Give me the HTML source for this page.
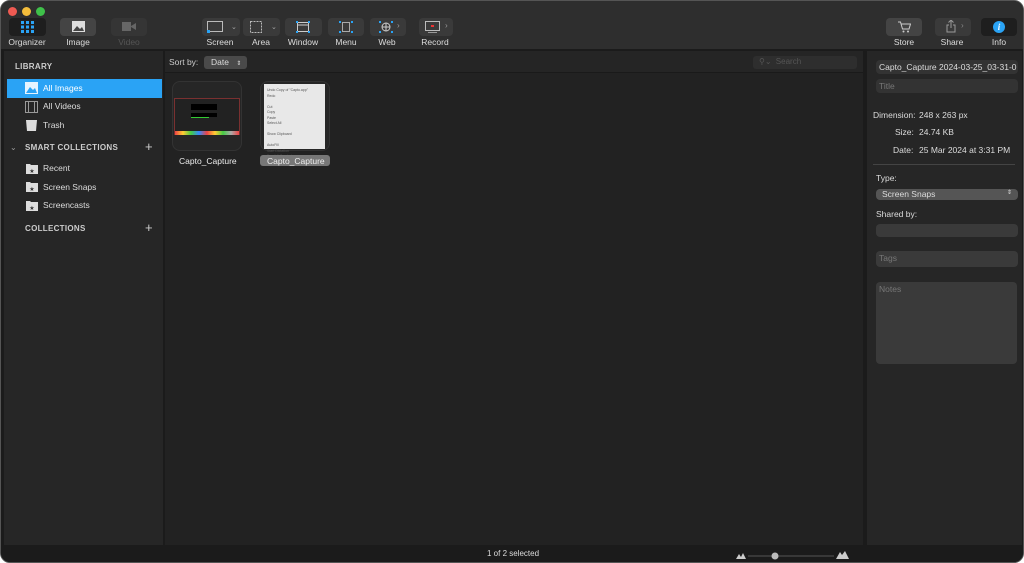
<!DOCTYPE html>
<html><head><meta charset="utf-8"><style>
*{margin:0;padding:0;box-sizing:border-box}
body{width:1024px;height:563px;background:#fff;font-family:"Liberation Sans",sans-serif;overflow:hidden;position:relative}
.win{position:absolute;left:0;top:0;width:1024px;height:563px;background:#1b1b1b;border-radius:10px;overflow:hidden;border:1px solid #555}
.a{position:absolute}
.tb{left:0;top:0;width:1024px;height:48px;background:#2e2e2e}
.btn{position:absolute;height:18px;top:17px;background:#3a3a3a;border-radius:4px}
.lbl{position:absolute;top:37px;font-size:8.5px;color:#ddd;text-align:center;width:60px;line-height:1.1}
.side{left:3px;top:50px;width:159px;height:494px;background:#262626}
.si{position:absolute;font-size:8.5px;color:#ddd;line-height:1}
.hd{position:absolute;font-size:8px;font-weight:bold;color:#ccc;letter-spacing:.3px;line-height:1}
.main{left:164px;top:50px;width:698px;height:494px;background:#222}
.rp{left:866px;top:50px;width:155px;height:494px;background:#262626}
.fld{position:absolute;left:875px;width:142px;background:#3a3a3a;border-radius:4px;font-size:8.5px;color:#777;padding:3px 3px;line-height:1}
</style></head><body><div class="win">
<div class="a tb"></div>
<div class="a" style="left:7px;top:6px;width:9px;height:9px;border-radius:50%;background:#ee5a52"></div>
<div class="a" style="left:21px;top:6px;width:9px;height:9px;border-radius:50%;background:#f4bd3b"></div>
<div class="a" style="left:35px;top:6px;width:9px;height:9px;border-radius:50%;background:#3fc14a"></div>

<div class="btn" style="left:8px;width:37px;background:#1e1e1e"></div>
<svg class="a" style="left:20px;top:20px" width="13" height="12"><g fill="#2aa3f5"><rect x="0" y="0" width="3" height="3"/><rect x="5" y="0" width="3" height="3"/><rect x="10" y="0" width="3" height="3"/><rect x="0" y="4.5" width="3" height="3"/><rect x="5" y="4.5" width="3" height="3"/><rect x="10" y="4.5" width="3" height="3"/><rect x="0" y="9" width="3" height="3"/><rect x="5" y="9" width="3" height="3"/><rect x="10" y="9" width="3" height="3"/></g></svg>
<div class="lbl" style="left:-4px">Organizer</div>
<div class="btn" style="left:59px;width:36px;background:#444"></div>
<svg class="a" style="left:71px;top:20px" width="13" height="11"><rect width="13" height="11" fill="#ddd"/><path d="M1 10 L5 5 L8 8 L10 6 L12 10Z" fill="#444"/></svg>
<div class="lbl" style="left:47px">Image</div>
<div class="btn" style="left:110px;width:36px;background:#353535"></div>
<svg class="a" style="left:121px;top:21px" width="14" height="9"><rect width="9" height="9" fill="#666"/><path d="M9 4 L14 1 L14 8 L9 5Z" fill="#666"/></svg>
<div class="lbl" style="left:98px;color:#555">Video</div>

<div class="btn" style="left:201px;width:38px"></div>
<svg class="a" style="left:206px;top:20px" width="16" height="12"><rect x=".5" y=".5" width="15" height="10" fill="none" stroke="#bbb"/><rect x="0" y="9" width="3" height="3" fill="#2aa3f5"/></svg>
<div class="a" style="left:230px;top:22px;font-size:7px;color:#aaa">⌄</div>
<div class="lbl" style="left:189px">Screen</div>
<div class="btn" style="left:242px;width:37px"></div>
<svg class="a" style="left:249px;top:20px" width="12" height="12"><rect x=".5" y=".5" width="11" height="11" fill="none" stroke="#bbb" stroke-dasharray="2 1"/></svg>
<div class="a" style="left:270px;top:22px;font-size:7px;color:#aaa">⌄</div>
<div class="lbl" style="left:230px">Area</div>
<div class="btn" style="left:284px;width:37px"></div>
<svg class="a" style="left:295px;top:20px" width="14" height="12"><rect x="1.5" y="1.5" width="11" height="9" fill="none" stroke="#ccc"/><line x1="1.5" y1="4" x2="12.5" y2="4" stroke="#ccc"/><g fill="#2aa3f5"><rect x="0" y="0" width="2" height="2"/><rect x="12" y="0" width="2" height="2"/><rect x="0" y="10" width="2" height="2"/><rect x="12" y="10" width="2" height="2"/></g></svg>
<div class="lbl" style="left:272px">Window</div>
<div class="btn" style="left:327px;width:36px"></div>
<svg class="a" style="left:338px;top:20px" width="14" height="12"><rect x="3.5" y="1.5" width="7" height="9" fill="none" stroke="#aaa"/><g fill="#2aa3f5"><rect x="0" y="0" width="2" height="2"/><rect x="12" y="0" width="2" height="2"/><rect x="0" y="10" width="2" height="2"/><rect x="12" y="10" width="2" height="2"/></g></svg>
<div class="lbl" style="left:315px">Menu</div>
<div class="btn" style="left:369px;width:36px"></div>
<svg class="a" style="left:378px;top:20px" width="14" height="12"><circle cx="7" cy="6" r="4" fill="none" stroke="#ccc"/><line x1="3" y1="6" x2="11" y2="6" stroke="#ccc"/><line x1="7" y1="2" x2="7" y2="10" stroke="#ccc"/><g fill="#2aa3f5"><rect x="0" y="0" width="2" height="2"/><rect x="12" y="0" width="2" height="2"/><rect x="0" y="10" width="2" height="2"/><rect x="12" y="10" width="2" height="2"/></g></svg>
<div class="a" style="left:396px;top:20px;font-size:8px;color:#999">›</div>
<div class="lbl" style="left:356px">Web</div>
<div class="btn" style="left:418px;width:34px"></div>
<svg class="a" style="left:424px;top:20px" width="16" height="12"><rect x=".5" y=".5" width="14" height="9" fill="none" stroke="#bbb"/><rect x="6" y="4" width="3" height="2" fill="#e33"/><line x1="3" y1="11.5" x2="12" y2="11.5" stroke="#999"/></svg>
<div class="a" style="left:444px;top:20px;font-size:8px;color:#999">›</div>
<div class="lbl" style="left:404px">Record</div>

<div class="btn" style="left:885px;width:36px;background:#444"></div>
<svg class="a" style="left:897px;top:20px" width="13" height="12"><path d="M0 1 H2.5 L4.5 8 H11 L12.5 3 H3.5" fill="none" stroke="#ccc"/><circle cx="5.5" cy="10.5" r="1" fill="#ccc"/><circle cx="10" cy="10.5" r="1" fill="#ccc"/></svg>
<div class="lbl" style="left:873px">Store</div>
<div class="btn" style="left:934px;width:36px"></div>
<svg class="a" style="left:945px;top:19px" width="10" height="13"><path d="M5 0 V8 M2.5 2.5 L5 0 L7.5 2.5 M3 5 H1 V12 H9 V5 H7" fill="none" stroke="#999"/></svg>
<div class="a" style="left:960px;top:20px;font-size:8px;color:#888">›</div>
<div class="lbl" style="left:921px">Share</div>
<div class="btn" style="left:980px;width:36px;background:#1e1e1e"></div>
<div class="a" style="left:992px;top:20px;width:12px;height:12px;border-radius:50%;background:#2aa3f5;color:#fff;font-size:9px;font-weight:bold;font-style:italic;text-align:center;line-height:12px;font-family:'Liberation Serif',serif">i</div>
<div class="lbl" style="left:968px">Info</div>

<div class="a side"></div>
<div class="hd" style="left:14px;top:62px">LIBRARY</div>
<div class="a" style="left:6px;top:78px;width:155px;height:19px;background:#2aa3f5"></div>
<svg class="a" style="left:24px;top:81px" width="13" height="12"><rect width="13" height="12" fill="#e6f4ff"/><path d="M1 11 L5 5 L8 8 L10 6 L12 11Z" fill="#2aa3f5"/></svg>
<div class="si" style="left:42px;top:83px;color:#fff">All Images</div>
<svg class="a" style="left:24px;top:100px" width="13" height="12"><rect x=".5" y=".5" width="12" height="11" fill="none" stroke="#999"/><line x1="3.5" y1="0" x2="3.5" y2="12" stroke="#999"/><line x1="9.5" y1="0" x2="9.5" y2="12" stroke="#999"/></svg>
<div class="si" style="left:42px;top:101px">All Videos</div>
<svg class="a" style="left:25px;top:118px" width="11" height="12"><path d="M0 1 H11 L10 12 H1Z" fill="#ddd"/></svg>
<div class="si" style="left:42px;top:120px">Trash</div>
<div class="a" style="left:9px;top:142px;font-size:8px;color:#999">⌄</div>
<div class="hd" style="left:24px;top:143px">SMART COLLECTIONS</div>
<div class="a" style="left:144px;top:138px;font-size:13px;color:#ccc">+</div>
<svg class="a" style="left:25px;top:162px" width="12" height="11"><path d="M0 1 H4 L5 2 H12 V11 H0Z" fill="#ddd"/><text x="6" y="10" font-size="6" text-anchor="middle" fill="#333">★</text></svg>
<div class="si" style="left:42px;top:163px">Recent</div>
<svg class="a" style="left:25px;top:180px" width="12" height="11"><path d="M0 1 H4 L5 2 H12 V11 H0Z" fill="#ddd"/><text x="6" y="10" font-size="6" text-anchor="middle" fill="#333">★</text></svg>
<div class="si" style="left:42px;top:182px">Screen Snaps</div>
<svg class="a" style="left:25px;top:199px" width="12" height="11"><path d="M0 1 H4 L5 2 H12 V11 H0Z" fill="#ddd"/><text x="6" y="10" font-size="6" text-anchor="middle" fill="#333">★</text></svg>
<div class="si" style="left:42px;top:200px">Screencasts</div>
<div class="hd" style="left:24px;top:224px">COLLECTIONS</div>
<div class="a" style="left:144px;top:219px;font-size:13px;color:#ccc">+</div>

<div class="a main"></div>
<div class="a" style="left:164px;top:50px;width:698px;height:22px;background:#252525;border-bottom:1px solid #1a1a1a"></div>
<div class="si" style="left:168px;top:57px;color:#ccc">Sort by:</div>
<div class="a" style="left:203px;top:55px;width:43px;height:13px;background:#4a4a4a;border-radius:3px;font-size:8.5px;color:#ddd;padding:2px 0 0 7px;line-height:1">Date <span style="font-size:6px;margin-left:5px">⇕</span></div>
<div class="a" style="left:752px;top:55px;width:104px;height:13px;background:#2e2e2e;border-radius:3px;font-size:8px;color:#555;padding:2px 0 0 6px;line-height:1">⚲⌄ <span style="margin-left:2px">Search</span></div>
<div class="a" style="left:171px;top:80px;width:70px;height:70px;border-radius:8px;background:#262626;border:1px solid #333"></div>
<div class="a" style="left:173px;top:97px;width:66px;height:37px;background:#222;border:1px solid #7a3030"></div>
<div class="a" style="left:190px;top:103px;width:26px;height:6px;background:#000"></div>
<div class="a" style="left:190px;top:112px;width:26px;height:4px;background:#000"></div>
<div class="a" style="left:190px;top:116px;width:18px;height:1px;background:#3c3"></div>
<div class="a" style="left:174px;top:130px;width:64px;height:4px;background:linear-gradient(90deg,#e44,#fc3,#4c4,#38f,#e44,#fc3,#4c4,#aaa,#e44)"></div>
<div class="si" style="left:178px;top:156px;color:#eee">Capto_Capture</div>
<div class="a" style="left:259px;top:80px;width:70px;height:70px;border-radius:8px;background:#262626;border:1px solid #333"></div>
<div class="a" style="left:263px;top:83px;width:61px;height:65px;background:#e8e8e8"></div>
<div class="a" style="left:266px;top:87px;font-size:3.5px;color:#555;line-height:5.5px">Undo Copy of "Capto.app"<br>Redo<br><br>Cut<br>Copy<br>Paste<br>Select All<br><br>Show Clipboard<br><br>AutoFill<br>Start Dictation<br>Emoji &amp; Symbols</div>
<div class="a" style="left:259px;top:154px;width:70px;height:11px;background:#777;border-radius:3px"></div>
<div class="si" style="left:266px;top:156px;color:#eee">Capto_Capture</div>

<div class="a rp"></div>
<div class="fld" style="top:59px;height:14px;color:#ddd;background:#333;overflow:hidden;white-space:nowrap">Capto_Capture 2024-03-25_03-31-0</div>
<div class="fld" style="top:78px;height:14px;background:#333">Title</div>
<div class="si" style="left:872px;top:110px">Dimension:</div><div class="si" style="left:918px;top:110px">248 x 263 px</div>
<div class="si" style="left:894px;top:127px">Size:</div><div class="si" style="left:918px;top:127px">24.74 KB</div>
<div class="si" style="left:892px;top:145px">Date:</div><div class="si" style="left:918px;top:145px">25 Mar 2024 at 3:31 PM</div>
<div class="a" style="left:872px;top:163px;width:142px;height:1px;background:#444"></div>
<div class="si" style="left:875px;top:173px">Type:</div>
<div class="fld" style="top:188px;height:11px;background:#555;color:#ddd;padding:1px 6px">Screen Snaps<span style="float:right;font-size:6px">⇕</span></div>
<div class="si" style="left:875px;top:209px">Shared by:</div>
<div class="fld" style="top:223px;height:13px"></div>
<div class="fld" style="top:250px;height:16px;padding-top:3px">Tags</div>
<div class="fld" style="top:281px;height:82px;left:875px;width:141px">Notes</div>

<div class="a" style="left:0;top:545px;width:1024px;height:18px;background:#1b1b1b"></div>
<div class="si" style="left:486px;top:549px;color:#ddd;font-size:8px">1 of 2 selected</div>
<svg class="a" style="left:735px;top:549px" width="115" height="10"><path d="M0 9 L3 4 L5 7 L7 3 L10 9Z" fill="#ccc"/><line x1="12" y1="6" x2="98" y2="6" stroke="#555"/><circle cx="39" cy="6" r="3.5" fill="#bbb"/><path d="M100 9 L104 2 L106 5 L109 1 L113 9Z" fill="#ccc"/></svg>
</div></body></html>
